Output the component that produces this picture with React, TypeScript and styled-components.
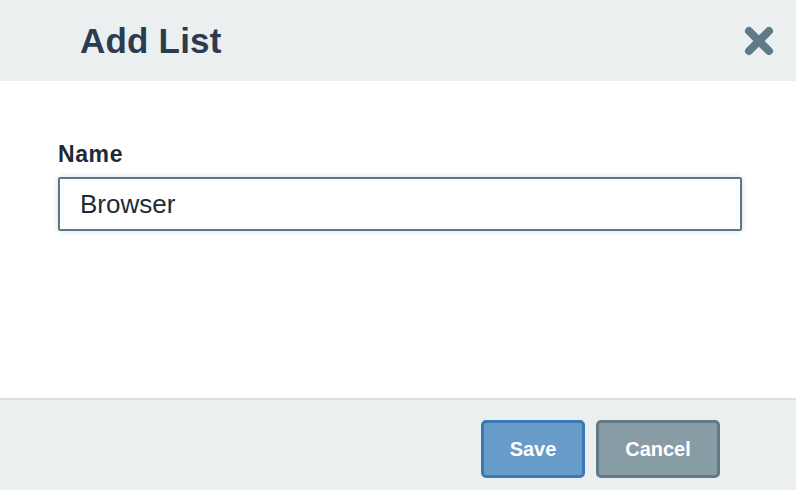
import styled, { createGlobalStyle } from "styled-components";

const GlobalStyle = createGlobalStyle`
  html, body {
    margin: 0;
    padding: 0;
    background: #ffffff;
  }
  body {
    font-family: "Liberation Sans", Arial, sans-serif;
  }
`;

const Modal = styled.div`
  width: 796px;
  height: 490px;
  display: flex;
  flex-direction: column;
  background: #ffffff;
`;

const Header = styled.header`
  height: 81px;
  flex-shrink: 0;
  display: flex;
  align-items: center;
  justify-content: space-between;
  padding: 0 20px 0 80px;
  background: #eceff0;
  box-sizing: border-box;
`;

const Title = styled.h1`
  margin: 0;
  font-size: 35px;
  font-weight: 700;
  color: #2a3d50;
  letter-spacing: 0.2px;
`;

const CloseButton = styled.button`
  background: transparent;
  border: none;
  padding: 0;
  width: 34px;
  height: 34px;
  display: flex;
  align-items: center;
  justify-content: center;
  cursor: pointer;
`;

const Body = styled.div`
  flex: 1;
  padding: 60px 54px 0 58px;
  box-sizing: border-box;
`;

const Label = styled.label`
  display: block;
  font-size: 23px;
  font-weight: 700;
  color: #1d2b38;
  letter-spacing: 0.6px;
  margin-bottom: 9px;
`;

const TextInput = styled.input`
  display: block;
  width: 100%;
  height: 54px;
  box-sizing: border-box;
  border: 2px solid #5e7786;
  border-radius: 2px;
  padding: 0 20px;
  font-family: "Liberation Sans", Arial, sans-serif;
  font-size: 26px;
  color: #1d2b38;
  background: #ffffff;
  box-shadow: 0 0 6px rgba(94, 119, 134, 0.25);
  outline: none;
`;

const Footer = styled.footer`
  height: 92px;
  flex-shrink: 0;
  display: flex;
  align-items: center;
  justify-content: flex-end;
  gap: 11px;
  padding: 8px 76px 0 0;
  background: #eceff0;
  border-top: 2px solid #d9e0e3;
  box-sizing: border-box;
`;

const Button = styled.button<{ $variant: "primary" | "secondary" }>`
  height: 58px;
  padding: 0 ${(p) => (p.$variant === "primary" ? "24px" : "25px")};
  min-width: ${(p) => (p.$variant === "primary" ? "104px" : "124px")};
  box-sizing: border-box;
  border-radius: 5px;
  border: 3px solid ${(p) => (p.$variant === "primary" ? "#3a79b6" : "#627987")};
  background: ${(p) => (p.$variant === "primary" ? "#679bc8" : "#889ca6")};
  color: #ffffff;
  font-family: "Liberation Sans", Arial, sans-serif;
  font-size: 20px;
  font-weight: 700;
  cursor: pointer;
`;

export default function App() {
  return (
    <>
      <GlobalStyle />
      <Modal>
        <Header>
          <Title>Add List</Title>
          <CloseButton title="Close">
            <svg width="32" height="32" viewBox="0 0 32 32">
              <path
                d="M6 6 L26 26 M26 6 L6 26"
                stroke="#5f7a89"
                strokeWidth="8"
                strokeLinecap="round"
              />
            </svg>
          </CloseButton>
        </Header>
        <Body>
          <Label htmlFor="list-name">Name</Label>
          <TextInput id="list-name" defaultValue="Browser" />
        </Body>
        <Footer>
          <Button $variant="primary">Save</Button>
          <Button $variant="secondary">Cancel</Button>
        </Footer>
      </Modal>
    </>
  );
}
